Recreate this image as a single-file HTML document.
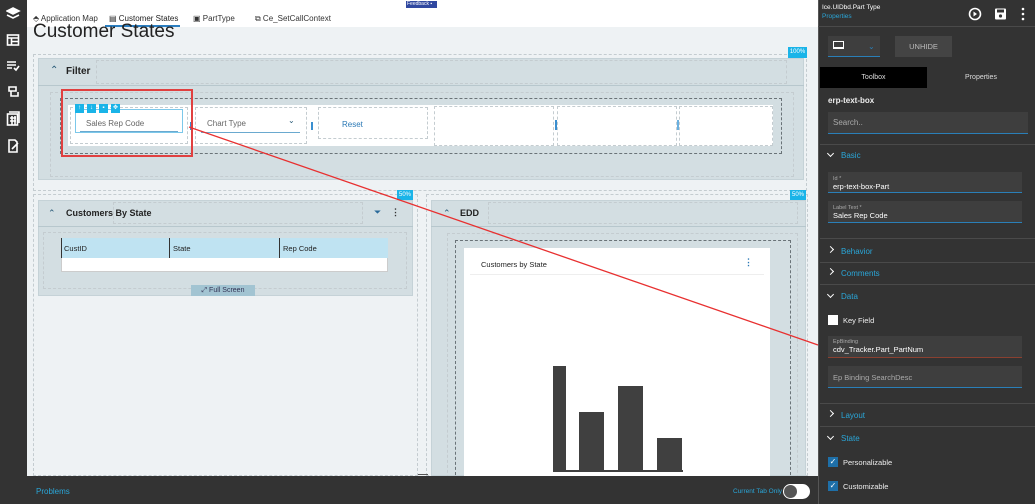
<!DOCTYPE html>
<html><head><meta charset="utf-8"><style>
*{box-sizing:border-box;margin:0;padding:0}
body{width:1035px;height:504px;overflow:hidden;position:relative;background:#eef2f4;font-family:"Liberation Sans",sans-serif;font-size:9px;color:#222}
.a{position:absolute}
.dash{position:absolute;border:1px dashed #c4ccd0}
.dd{position:absolute;border:1px dashed #6a7378}
.badge{position:absolute;background:#1ab4e8;color:#fff;font-size:6px;text-align:center;line-height:11px;height:11px}
.rp{color:#ddd}
.sec{position:absolute;left:828px;color:#2aa6d8;font-size:8px}
.sec:before{content:"";display:inline-block;width:4px;height:4px;border-right:1.5px solid #fff;border-bottom:1.5px solid #fff;margin-right:8px;vertical-align:2px}
.sec.c:before{transform:rotate(-45deg)}
.sec.o:before{transform:rotate(45deg)}
.hr{position:absolute;left:820px;width:215px;height:1px;background:#4a4a4a}
.fld{position:absolute;left:828px;width:194px;background:#3e3e3e;border-bottom:1px solid #2a7fb8;color:#fff}
.cb{position:absolute;left:828px;width:10px;height:10px;background:#1e6fa8;color:#fff;font-size:8px;line-height:10px;text-align:center}
.si{position:absolute;left:8px;width:12px;height:11px}
</style></head><body>
<!-- left sidebar -->
<div class="a" style="left:0;top:0;width:27px;height:504px;background:#333"></div>
<svg class="a" style="left:6px;top:7px" width="15" height="150" fill="none" stroke="#fff" stroke-width="1.6">
<path d="M7 1L13 4L7 7L1 4Z" fill="#fff"/><path d="M1 8L7 11L13 8"/>
<rect x="1.5" y="28" width="11" height="10"/><path d="M1.5 31H12.5M5.5 31V38M5.5 34.5H12.5"/>
<path d="M1 55H10M1 58H10M1 61H6M8 61L10 63L13 59"/>
<path d="M3 80H10V84H3ZM5 84V89H12V85"/>
<rect x="1.5" y="107" width="10" height="11"/><path d="M3 105H13V116M4 111H10M4 114H10M6 109V118M9 109V118"/>
<path d="M3 133H9L11 135V145H3ZM6 142L12 136"/>
</svg>
<!-- top tabs -->
<div class="a" style="left:27px;top:0;width:791px;height:27px;background:#fff"></div>
<div class="a" style="left:33px;top:14px;font-size:8px;color:#333">⬘ Application Map</div>
<div class="a" style="left:109px;top:14px;font-size:8px;color:#222">▤ Customer States</div>
<div class="a" style="left:105px;top:25px;width:75px;height:2px;background:#2b7ec0"></div>
<div class="a" style="left:193px;top:14px;font-size:8px;color:#333">▣ PartType</div>
<div class="a" style="left:255px;top:14px;font-size:8px;color:#333">⧉ Ce_SetCallContext</div>
<div class="a" style="left:406px;top:1px;width:31px;height:7px;background:#3048a0;color:#fff;font-size:5px;line-height:7px;padding-left:1px">Feedback ▪</div>
<div class="a" style="left:33px;top:21px;width:200px;height:22px;overflow:hidden;font-size:19px;color:#222;line-height:22px">Customer States</div>
<div class="a" style="left:27px;top:0;width:791px;height:20px;overflow:hidden"></div>
<!-- filter section -->
<div class="dash" style="left:33px;top:54px;width:774px;height:137px"></div>
<div class="badge" style="left:788px;top:47px;width:19px">100%</div>
<div class="a" style="left:38px;top:58px;width:766px;height:122px;background:#d3dee2;border:1px solid #c5d2d7"></div>
<div class="dash" style="left:96px;top:60px;width:691px;height:24px"></div>
<div class="a" style="left:38px;top:85px;width:766px;height:1px;background:#b7c7cd"></div>
<div class="a" style="left:50px;top:65px;font-size:10px;color:#2b5c7a">⌃</div>
<div class="a" style="left:66px;top:66px;font-size:10px;font-weight:bold">Filter</div>
<div class="dash" style="left:50px;top:92px;width:744px;height:85px"></div>
<div class="dd" style="left:60px;top:98px;width:722px;height:56px"></div>
<div class="a" style="left:68px;top:105px;width:705px;height:41px;background:#fff"></div>
<div class="dash" style="left:70px;top:107px;width:118px;height:37px"></div>
<div class="dash" style="left:195px;top:107px;width:112px;height:37px"></div>
<div class="dash" style="left:318px;top:107px;width:110px;height:32px"></div>
<div class="dash" style="left:434px;top:106px;width:120px;height:40px"></div>
<div class="dash" style="left:557px;top:106px;width:120px;height:40px"></div>
<div class="dash" style="left:679px;top:106px;width:94px;height:40px"></div>
<div class="a" style="left:75px;top:109px;width:108px;height:24px;border:1px solid #7cc8ea;background:#fff"></div>
<div class="a" style="left:86px;top:119px;font-size:8px;color:#666">Sales Rep Code</div>
<div class="a" style="left:80px;top:131px;width:98px;height:1px;background:#6aa9cf"></div>
<div class="a" style="left:75px;top:104px;width:9px;height:9px;background:#1ab4e8;color:#fff;font-size:6px;text-align:center;line-height:9px">↑</div>
<div class="a" style="left:87px;top:104px;width:9px;height:9px;background:#1ab4e8;color:#fff;font-size:6px;text-align:center;line-height:9px">↓</div>
<div class="a" style="left:99px;top:104px;width:9px;height:9px;background:#1ab4e8;color:#fff;font-size:6px;text-align:center;line-height:9px">▪</div>
<div class="a" style="left:111px;top:104px;width:9px;height:9px;background:#1ab4e8;color:#fff;font-size:6px;text-align:center;line-height:9px">✥</div>
<div class="a" style="left:207px;top:119px;font-size:8px;color:#666">Chart Type</div>
<div class="a" style="left:288px;top:116px;font-size:8px;color:#2b5c7a">⌄</div>
<div class="a" style="left:201px;top:132px;width:99px;height:1px;background:#6aa9cf"></div>
<div class="a" style="left:342px;top:120px;font-size:8px;color:#2a78b5">Reset</div>
<div class="a" style="left:190px;top:122px;width:1.5px;height:8px;background:#3a8fd0"></div>
<div class="a" style="left:311px;top:122px;width:1.5px;height:8px;background:#3a8fd0"></div>
<div class="a" style="left:555px;top:120px;width:1.5px;height:10px;background:#3a8fd0"></div>
<div class="a" style="left:677px;top:120px;width:1.5px;height:10px;background:#6ab0e0"></div>
<div class="a" style="left:61px;top:89px;width:132px;height:68px;border:2px solid #e04040"></div>
<!-- customers by state -->
<div class="dash" style="left:33px;top:194px;width:385px;height:282px"></div>
<div class="badge" style="left:397px;top:190px;width:16px">50%</div>
<div class="a" style="left:38px;top:200px;width:375px;height:96px;background:#d3dee2;border:1px solid #c5d2d7"></div>
<div class="dash" style="left:113px;top:202px;width:250px;height:22px"></div>
<div class="a" style="left:38px;top:226px;width:375px;height:1px;background:#b7c7cd"></div>
<div class="a" style="left:48px;top:208px;font-size:9px;color:#2b5c7a">⌃</div>
<div class="a" style="left:66px;top:208px;font-size:9px;font-weight:bold">Customers By State</div>
<div class="a" style="left:374px;top:207px;font-size:9px;color:#2a6a9a">⏷</div>
<div class="a" style="left:391px;top:207px;font-size:9px;color:#333;font-weight:bold">⋮</div>
<div class="dash" style="left:43px;top:232px;width:364px;height:57px"></div>
<div class="a" style="left:61px;top:238px;width:327px;height:34px;background:#fff;border:1px solid #ccc"></div>
<div class="a" style="left:61px;top:238px;width:327px;height:20px;background:#bfe3f2;border-left:1px solid #333"></div>
<div class="a" style="left:169px;top:238px;width:1px;height:20px;background:#333"></div>
<div class="a" style="left:279px;top:238px;width:1px;height:20px;background:#333"></div>
<div class="a" style="left:64px;top:244px;font-size:7.5px">CustID</div>
<div class="a" style="left:173px;top:244px;font-size:7.5px">State</div>
<div class="a" style="left:283px;top:244px;font-size:7.5px">Rep Code</div>
<div class="a" style="left:191px;top:285px;width:64px;height:11px;background:#a2c4d2;font-size:7px;color:#335;text-align:center;line-height:11px">⤢ Full Screen</div>
<!-- EDD -->
<div class="dash" style="left:426px;top:194px;width:382px;height:282px"></div>
<div class="badge" style="left:790px;top:190px;width:16px">50%</div>
<div class="a" style="left:431px;top:200px;width:375px;height:276px;background:#d3dee2;border:1px solid #c5d2d7"></div>
<div class="dash" style="left:435px;top:202px;width:8px;height:22px;border:none"></div>
<div class="dash" style="left:488px;top:202px;width:310px;height:22px"></div>
<div class="a" style="left:431px;top:226px;width:375px;height:1px;background:#b7c7cd"></div>
<div class="a" style="left:443px;top:208px;font-size:9px;color:#2b5c7a">⌃</div>
<div class="a" style="left:460px;top:208px;font-size:9px;font-weight:bold">EDD</div>
<div class="dash" style="left:447px;top:233px;width:351px;height:250px"></div>
<div class="dd" style="left:455px;top:240px;width:336px;height:240px"></div>
<div class="a" style="left:464px;top:248px;width:306px;height:228px;background:#fff"></div>
<div class="a" style="left:470px;top:274px;width:294px;height:1px;background:#eee"></div>
<div class="a" style="left:481px;top:260px;font-size:7.5px">Customers by State</div>
<div class="a" style="left:744px;top:257px;font-size:9px;color:#2a78b5;font-weight:bold">⋮</div>
<div class="a" style="left:553px;top:366px;width:13px;height:106px;background:#404040"></div>
<div class="a" style="left:579px;top:412px;width:25px;height:60px;background:#404040"></div>
<div class="a" style="left:618px;top:386px;width:25px;height:86px;background:#404040"></div>
<div class="a" style="left:657px;top:438px;width:25px;height:34px;background:#404040"></div>
<div class="a" style="left:553px;top:470px;width:130px;height:2px;background:#404040"></div>
<div class="a" style="left:418px;top:474px;width:10px;height:1px;background:#555"></div>
<!-- bottom bar -->
<div class="a" style="left:0;top:476px;width:818px;height:28px;background:#333"></div>
<div class="a" style="left:36px;top:487px;font-size:8px;color:#2aa6d8">Problems</div>
<div class="a" style="left:733px;top:488px;font-size:6.5px;color:#2aa6d8">Current Tab Only</div>
<div class="a" style="left:783px;top:484px;width:27px;height:15px;background:#fff;border-radius:8px"></div>
<div class="a" style="left:784px;top:485px;width:13px;height:13px;background:#555;border-radius:50%"></div>
<!-- arrow -->
<svg class="a" style="left:0;top:0" width="1035" height="504"><line x1="189" y1="127" x2="818" y2="345" stroke="#e83030" stroke-width="1.3"/></svg>
<!-- right panel -->
<div class="a" style="left:818px;top:0;width:217px;height:504px;background:#333;border-left:1px solid #555"></div>
<div class="a" style="left:822px;top:4px;font-size:6.5px;color:#fff">Ice.UIDbd.Part Type</div>
<div class="a" style="left:822px;top:13px;font-size:6.5px;color:#2aa6d8">Properties</div>
<svg class="a" style="left:967px;top:6px" width="65" height="16"><circle cx="8" cy="8" r="5.5" fill="none" stroke="#fff" stroke-width="1.6"/><path d="M6.5 5.5V10.5L10 8Z" fill="#fff"/><rect x="28" y="2.5" width="11" height="11" fill="#fff" rx="1"/><rect x="30" y="3.5" width="7" height="3" fill="#333"/><circle cx="33.5" cy="10" r="1.6" fill="#333"/><circle cx="56" cy="3" r="1.3" fill="#fff"/><circle cx="56" cy="8" r="1.3" fill="#fff"/><circle cx="56" cy="13" r="1.3" fill="#fff"/></svg>
<div class="a" style="left:818px;top:26px;width:217px;height:1px;background:#4a4a4a"></div>
<div class="a" style="left:828px;top:36px;width:52px;height:21px;background:#3e3e3e;border-bottom:1px solid #2a7fb8"></div>
<div class="a" style="left:833px;top:41px;width:11px;height:8px;border:1.5px solid #fff;border-bottom-width:2px"></div>
<div class="a" style="left:868px;top:42px;font-size:8px;color:#2a7fb8">⌄</div>
<div class="a" style="left:895px;top:36px;width:57px;height:21px;background:#444;color:#bbb;font-size:7.5px;text-align:center;line-height:21px">UNHIDE</div>
<div class="a" style="left:820px;top:67px;width:107px;height:21px;background:#000;color:#ddd;font-size:7px;text-align:center;line-height:21px">Toolbox</div>
<div class="a" style="left:927px;top:67px;width:108px;height:21px;color:#ddd;font-size:7px;text-align:center;line-height:21px">Properties</div>
<div class="a" style="left:828px;top:96px;font-size:8px;font-weight:bold;color:#eee">erp-text-box</div>
<div class="fld" style="top:112px;height:22px;width:200px;color:#aaa;font-size:8px;padding:6px 5px">Search..</div>
<div class="hr" style="top:144px"></div>
<div class="sec o" style="top:151px">Basic</div>
<div class="fld" style="top:172px;height:21px"><div style="font-size:5.5px;color:#aaa;padding:4px 5px 0">Id *</div><div style="font-size:7.5px;padding:0 5px">erp-text-box-Part</div></div>
<div class="fld" style="top:201px;height:22px"><div style="font-size:5.5px;color:#aaa;padding:4px 5px 0">Label Text *</div><div style="font-size:7.5px;padding:0 5px">Sales Rep Code</div></div>
<div class="hr" style="top:238px"></div>
<div class="sec c" style="top:247px">Behavior</div>
<div class="hr" style="top:262px"></div>
<div class="sec c" style="top:269px">Comments</div>
<div class="hr" style="top:284px"></div>
<div class="sec o" style="top:292px">Data</div>
<div class="a" style="left:828px;top:315px;width:10px;height:10px;background:#fff"></div>
<div class="a" style="left:843px;top:316px;font-size:7.5px;color:#eee">Key Field</div>
<div class="fld" style="top:336px;height:22px;border-color:#8a4030"><div style="font-size:5.5px;color:#aaa;padding:3px 5px 0">EpBinding</div><div style="font-size:7.5px;padding:0 5px">cdv_Tracker.Part_PartNum</div></div>
<div class="fld" style="top:366px;height:22px;color:#aaa;font-size:7.5px;padding:7px 5px">Ep Binding SearchDesc</div>
<div class="hr" style="top:403px"></div>
<div class="sec c" style="top:411px">Layout</div>
<div class="hr" style="top:426px"></div>
<div class="sec o" style="top:434px">State</div>
<div class="cb" style="top:457px">✓</div>
<div class="a" style="left:843px;top:458px;font-size:7.5px;color:#eee">Personalizable</div>
<div class="cb" style="top:481px">✓</div>
<div class="a" style="left:843px;top:482px;font-size:7.5px;color:#eee">Customizable</div>
</body></html>
